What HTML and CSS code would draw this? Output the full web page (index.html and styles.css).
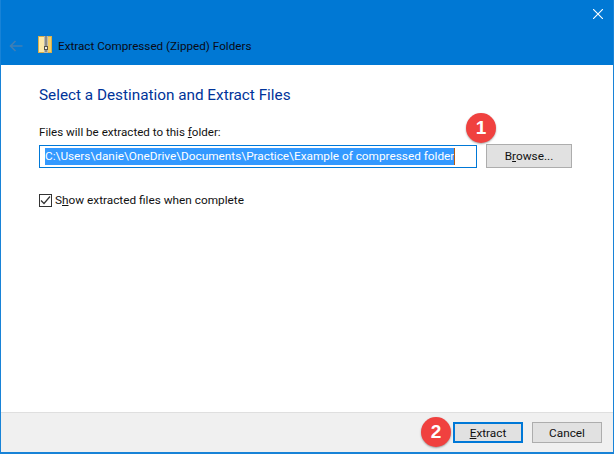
FILE: index.html
```html
<!DOCTYPE html>
<html lang="en">
<head>
<meta charset="utf-8">
<title>Extract Compressed (Zipped) Folders</title>
<link rel="stylesheet" href="styles.css">
</head>
<body>
<div class="window">
  <header class="titlebar">
    <div class="caption">
      <button class="close" aria-label="Close">
        <svg width="10" height="10" viewBox="0 0 10 10"><path d="M0 0L10 10M10 0L0 10" stroke="#fff" stroke-width="1.1" fill="none"/></svg>
      </button>
    </div>
    <div class="nav">
      <svg class="back" width="14" height="12" viewBox="0 0 14 12"><path d="M13.5 6H1.5M6.5 1L1.5 6L6.5 11" stroke="#3f7fb5" stroke-width="1.6" fill="none"/></svg>
      <svg class="zip" width="14" height="17" viewBox="0 0 14 17">
        <rect x="0.5" y="0.5" width="13" height="16" fill="#f3cf66" stroke="#d9ae4a"/>
        <rect x="1" y="1" width="5" height="15" fill="#fbe9a8"/>
        <rect x="6" y="0" width="4" height="17" fill="#b9b9b2"/>
        <path d="M7 1H9M7 3H9M7 5H9M7 7H9M7 9H9M7 15H9" stroke="#55554f" stroke-width="0.9"/>
        <rect x="6.5" y="10.5" width="3" height="3" fill="#efefe8" stroke="#55554f"/>
      </svg>
      <span class="title">Extract Compressed (Zipped) Folders</span>
    </div>
  </header>
  <main class="content">
    <h1 class="heading">Select a Destination and Extract Files</h1>
    <label class="field-label">Files will be extracted to this <u>f</u>older:</label>
    <div class="path-row">
      <div class="path-box"><span class="selected">C:\Users\danie\OneDrive\Documents\Practice\Example of compressed folder</span><span class="caret"></span></div>
      <button class="btn browse">B<u>r</u>owse...</button>
      <span class="badge badge-one">1</span>
    </div>
    <div class="check-row">
      <span class="checkbox"><svg width="13" height="13" viewBox="0 0 13 13"><path d="M2 6.5L5 9.5L11 2.5" stroke="#333" stroke-width="1.2" fill="none"/></svg></span>
      <span class="check-label">S<u>h</u>ow extracted files when complete</span>
    </div>
  </main>
  <footer class="footer">
    <div class="primary-wrap">
      <span class="badge badge-two">2</span>
      <button class="btn primary"><u>E</u>xtract</button>
    </div>
    <button class="btn cancel">Cancel</button>
  </footer>
</div>
</body>
</html>
```

FILE: styles.css
```css
* { box-sizing: border-box; }
html, body { margin: 0; padding: 0; }
body {
  width: 614px;
  height: 454px;
  overflow: hidden;
  font-family: Roboto, "Open Sans", sans-serif;
  font-size: 12px;
  color: #111;
  background: #fff;
}
u { text-underline-offset: 1px; }
.window {
  width: 614px;
  height: 454px;
  display: flex;
  flex-direction: column;
  border: 1px solid #1883d7;
  border-top: 0;
  background: #fff;
}
.titlebar {
  height: 65px;
  background: #0078d4;
  display: flex;
  flex-direction: column;
  flex: none;
}
.caption { display: flex; justify-content: flex-end; height: 32px; }
.close {
  width: 30px;
  height: 28px;
  padding: 0;
  border: 0;
  background: transparent;
  display: flex;
  align-items: center;
  justify-content: center;
}
.nav { display: flex; align-items: center; height: 27px; padding-left: 8px; }
.back { margin-right: 15px; }
.zip { margin: 0 6px 2px 0; }
.title { font-size: 11.7px; color: #0a0a14; }
.content { flex: 1; padding: 20px 37px 0 38px; min-height: 0; }
.heading {
  margin: 0 0 18px;
  font-size: 15.3px;
  line-height: 21px;
  font-weight: 400;
  color: #003399;
}
.field-label { display: block; font-size: 11.6px; line-height: 16px; margin-bottom: 5px; }
.path-row { position: relative; display: flex; align-items: flex-start; gap: 9px; }
.path-box {
  width: 438px;
  height: 23px;
  border: 1px solid #0078d7;
  padding: 2px 0 0 5px;
  display: flex;
  white-space: nowrap;
}
.selected {
  display: block;
  height: 17px;
  line-height: 17px;
  font-size: 11.8px;
  background: #3399ff;
  color: #fff;
}
.caret { display: block; width: 1px; height: 17px; background: #b85a10; }
.btn {
  font-family: inherit;
  font-size: 11.8px;
  color: #111;
  height: 21px;
  padding: 0;
  background: #e1e1e1;
  border: 1px solid #adadad;
}
.browse { width: 86px; height: 24px; margin-top: -1px; }
.badge {
  position: absolute;
  width: 30px;
  height: 30px;
  border-radius: 50%;
  background: #f0413f;
  color: #fff;
  font-family: "Liberation Sans", sans-serif;
  font-weight: 700;
  font-size: 19px;
  line-height: 30px;
  text-align: center;
  box-shadow: 0 1px 2px rgba(0,0,0,.35);
}
.badge-one { left: 427px; top: -32px; }
.badge-two { left: -32px; top: -5px; }
.check-row { display: flex; align-items: center; margin-top: 24px; }
.checkbox {
  width: 13px;
  height: 13px;
  border: 1px solid #333;
  display: flex;
  align-items: center;
  justify-content: center;
  margin-right: 3px;
  flex: none;
}
.checkbox svg { flex: none; }
.check-label { font-size: 11.8px; line-height: 16px; }
.footer {
  flex: none;
  height: 41px;
  background: #f0f0f0;
  border-top: 1px solid #dfdfdf;
  border-bottom: 1px solid #1883d7;
  display: flex;
  justify-content: flex-end;
  align-items: flex-start;
  gap: 9px;
  padding: 9px 11px 0 0;
}
.primary-wrap { position: relative; display: flex; }
.primary { width: 70px; border: 2px solid #0078d7; }
.cancel { width: 70px; }
```
